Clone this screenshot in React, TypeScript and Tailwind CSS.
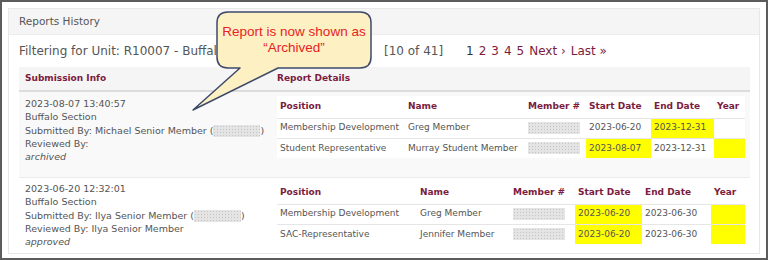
import React from 'react';

// Reports history panel with a callout over it
const MAROON = 'text-[#7b1c3e]';

function Blur({ w }: { w: number }) {
  return (
    <span
      className="inline-block h-[12px] align-middle bg-[#e4e4e4] bg-[radial-gradient(#c4c4c4_0.8px,transparent_1px)] bg-size-[3px_3px]"
      style={{ width: w }}
    />
  );
}

interface Row {
  position: string;
  name: string;
  start: string;
  end: string;
  hiStart?: boolean;
  hiEnd?: boolean;
  hiYear?: boolean;
}

function Details({ rows, cols, blurW, last }: { rows: Row[]; cols: number[]; blurW: number; last?: boolean }) {
  const hi = 'bg-[#ffff00]';
  return (
    <table className={`table-fixed border-collapse bg-white w-[468px] ${last ? 'mb-[8px]' : 'mb-[19px]'}`}>
      <colgroup>
        {cols.map((c, i) => (
          <col key={i} style={{ width: c }} />
        ))}
      </colgroup>
      <thead>
        <tr className={`h-[22px] text-left font-bold ${MAROON}`}>
          <th className="pl-[3px]">Position</th>
          <th className="pl-[3px]">Name</th>
          <th className="pl-[3px]">Member #</th>
          <th className="pl-[3px]">Start Date</th>
          <th className="pl-[3px]">End Date</th>
          <th className="pl-[3px]">Year</th>
        </tr>
      </thead>
      <tbody>
        {rows.map((r) => (
          <tr key={r.position} className="h-[20px] border-t border-[#e6e6e6] whitespace-nowrap">
            <td className="pl-[3px]">{r.position}</td>
            <td className="pl-[3px]">{r.name}</td>
            <td className="pl-[3px]"><Blur w={blurW} /></td>
            <td className={`pl-[3px] ${r.hiStart ? hi : ''}`}>{r.start}</td>
            <td className={`pl-[3px] ${r.hiEnd ? hi : ''}`}>{r.end}</td>
            <td className={r.hiYear ? hi : ''}></td>
          </tr>
        ))}
      </tbody>
    </table>
  );
}

export default function App() {
  return (
    <div className="relative w-[768px] h-[260px] overflow-hidden border-2 border-[#5c5c5c] bg-white font-['DejaVu_Sans',Verdana,sans-serif] text-[#555]">
      <div className="mx-[6px] mt-[6px] h-[246px] border border-[#e8e8e8]">
        <div className="h-[26px] flex items-center px-[10px] bg-[#f5f5f5] border-b border-[#ececec] text-[10.5px]">
          Reports History
        </div>

        <div className="px-[10px]">
          <div className="h-[32px] flex items-center text-[12px] whitespace-nowrap">
            {/* the callout hides the rest of this line */}
            <span className="w-[198px] overflow-hidden">Filtering for Unit: R10007 - Buffalo Section</span>
            <span className="w-[167px]" />
            <span className="w-[82px]">[10 of 41]</span>
            <span className="flex gap-[5px]">
              <span className="text-[#333]">1</span>
              <span className={MAROON}>2</span>
              <span className={MAROON}>3</span>
              <span className={MAROON}>4</span>
              <span className={MAROON}>5</span>
              <span className={MAROON}>Next ›</span>
              <span className={MAROON}>Last »</span>
            </span>
          </div>

          <table className="w-[731px] table-fixed border-collapse">
            <colgroup>
              <col className="w-[252px]" />
              <col />
            </colgroup>
            <thead>
              <tr className={`h-[24px] bg-[#f5f5f5] border-b-2 border-[#dcdcdc] text-left text-[9px] font-bold ${MAROON}`}>
                <th className="pl-[6px]">Submission Info</th>
                <th className="pl-[6px]">Report Details</th>
              </tr>
            </thead>
            <tbody>
              <tr className="bg-[#f9f9f9] border-b border-[#ececec] align-top">
                <td className="pl-[6px] pt-[5px] text-[9.5px] leading-[13.3px] whitespace-nowrap">
                  <div>2023-08-07 13:40:57</div>
                  <div>Buffalo Section</div>
                  <div>Submitted By: Michael Senior Member (<Blur w={47} />)</div>
                  <div>Reviewed By:</div>
                  <div className="italic">archived</div>
                </td>
                <td className="pl-[6px] pt-[4px] text-[9px]">
                  <Details
                    cols={[128, 120, 61, 65, 63, 31]}
                    blurW={52}
                    rows={[
                      { position: 'Membership Development', name: 'Greg Member', start: '2023-06-20', end: '2023-12-31', hiEnd: true },
                      { position: 'Student Representative', name: 'Murray Student Member', start: '2023-08-07', end: '2023-12-31', hiStart: true, hiYear: true },
                    ]}
                  />
                </td>
              </tr>
              <tr className="align-top">
                <td className="pl-[6px] pt-[4px] text-[9.5px] leading-[13.3px] whitespace-nowrap">
                  <div>2023-06-20 12:32:01</div>
                  <div>Buffalo Section</div>
                  <div>Submitted By: Ilya Senior Member (<Blur w={47} />)</div>
                  <div>Reviewed By: Ilya Senior Member</div>
                  <div className="italic">approved</div>
                </td>
                <td className="pl-[6px] pt-[4px] text-[9px]">
                  <Details
                    last
                    cols={[140, 93, 65, 67, 69, 34]}
                    blurW={52}
                    rows={[
                      { position: 'Membership Development', name: 'Greg Member', start: '2023-06-20', end: '2023-06-30', hiStart: true, hiYear: true },
                      { position: 'SAC-Representative', name: 'Jennifer Member', start: '2023-06-20', end: '2023-06-30', hiStart: true, hiYear: true },
                    ]}
                  />
                </td>
              </tr>
            </tbody>
          </table>
        </div>
      </div>

      {/* callout */}
      <svg className="absolute left-0 top-0 pointer-events-none" width="766" height="258" viewBox="2 2 766 258">
        <path
          d="M228,12 H360 Q371,12 371,23 V57 Q371,68 360,68 H278 L193,110 L240,68 H228 Q217,68 217,57 V23 Q217,12 228,12 Z"
          fill="#fdf0c2"
          stroke="#3d4a6a"
          strokeWidth="1.5"
          strokeLinejoin="round"
        />
      </svg>
      <div className="absolute left-[215px] top-[10px] w-[154px] h-[56px] flex flex-col items-center justify-center text-[13.5px] leading-[16px] text-[#e8231f] font-['Liberation_Sans',Arial,sans-serif]">
        <div>Report is now shown as</div>
        <div>“Archived”</div>
      </div>
    </div>
  );
}
